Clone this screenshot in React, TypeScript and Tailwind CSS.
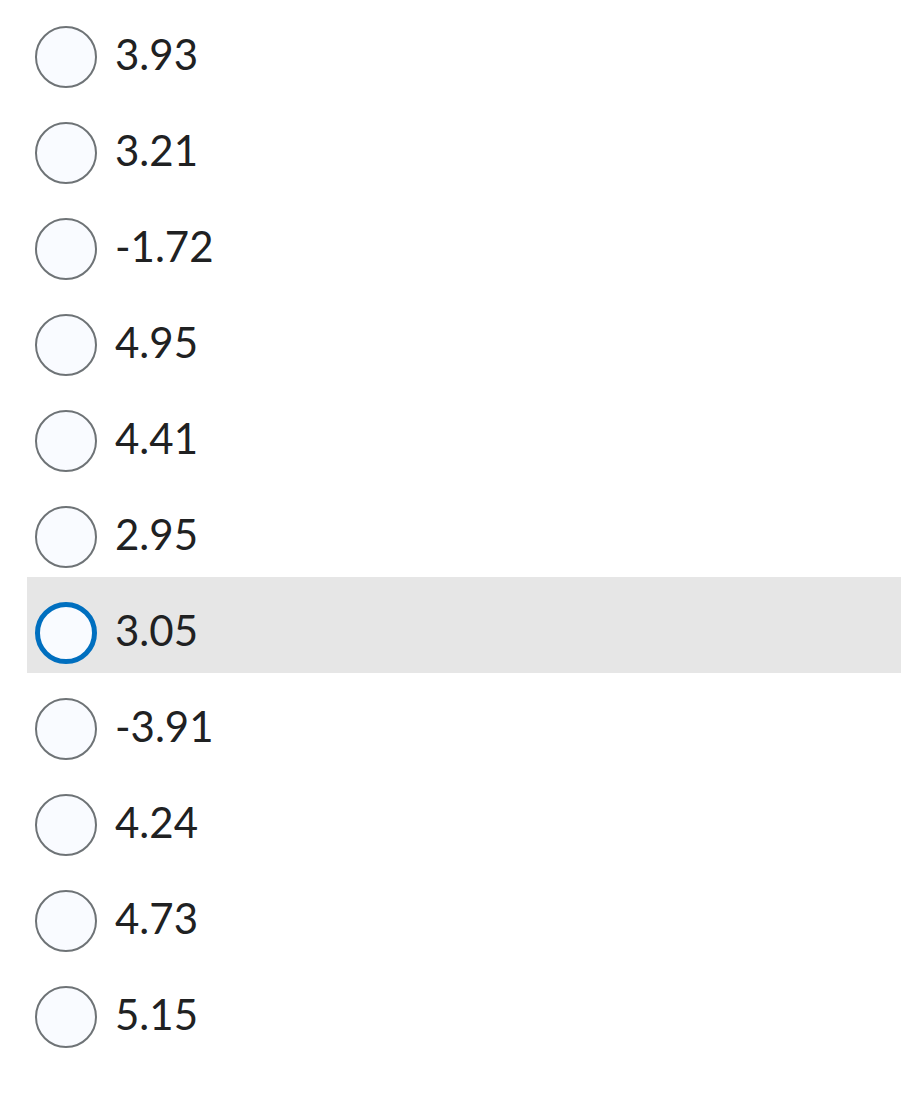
const options = [
  { id: 'a', label: '3.93' },
  { id: 'b', label: '3.21' },
  { id: 'c', label: '-1.72' },
  { id: 'd', label: '4.95' },
  { id: 'e', label: '4.41' },
  { id: 'f', label: '2.95' },
  { id: 'g', label: '3.05', focused: true },
  { id: 'h', label: '-3.91' },
  { id: 'i', label: '4.24' },
  { id: 'j', label: '4.73' },
  { id: 'k', label: '5.15' },
];

export default function App() {
  return (
    <div
      className="min-h-screen bg-white pl-[27px] pt-px text-[#202122]"
      style={{ fontFamily: 'Lato, "Noto Sans", sans-serif' }}
    >
      {options.map((o) => (
        <label
          key={o.id}
          className={`flex h-[96px] items-center gap-[18px] pl-[8px] pt-[16px] ${
            o.focused ? 'bg-[#e6e6e6]' : ''
          }`}
        >
          <span
            className={`box-border h-[62px] w-[62px] shrink-0 rounded-full bg-[#f9fbff] ${
              o.focused ? 'border-[5px] border-[#006fbf]' : 'border-2 border-[#6e7376]'
            }`}
          />
          <span className="mb-[6px] text-[42px] leading-none">{o.label}</span>
        </label>
      ))}
    </div>
  );
}
